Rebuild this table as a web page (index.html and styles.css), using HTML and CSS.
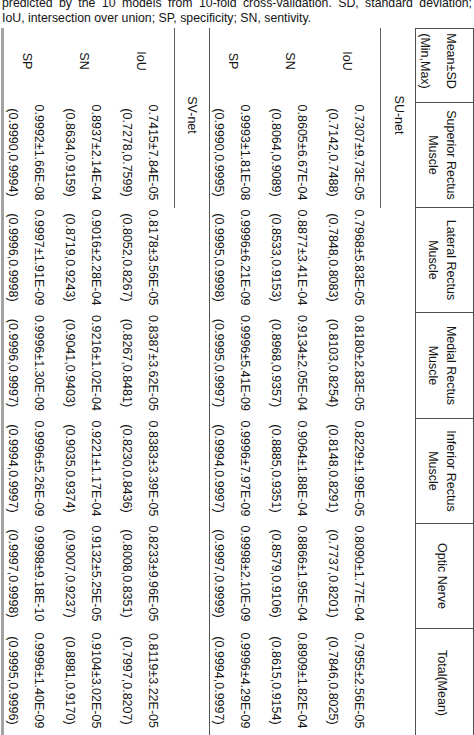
FILE: index.html
```html
<!DOCTYPE html>
<html lang="en">
<head>
<meta charset="utf-8">
<title>Table</title>
<link rel="stylesheet" href="styles.css">
</head>
<body>
<p class="caption"><span class="just">predicted by the 10 models from 10-fold cross-validation. SD, standard deviation;</span><span class="line">IoU, intersection over union; SP, specificity; SN, sentivity.</span></p>
<div class="table-wrap">
  <div class="table">
    <div class="row head">
      <div class="h first"><div>Mean±SD</div><div class="h2">(Min,Max)</div></div>
      <div class="h"><div>Superior Rectus</div><div>Muscle</div></div>
      <div class="h"><div>Lateral Rectus</div><div>Muscle</div></div>
      <div class="h"><div>Medial Rectus</div><div>Muscle</div></div>
      <div class="h"><div>Inferior Rectus</div><div>Muscle</div></div>
      <div class="h"><div>Optic Nerve</div></div>
      <div class="h"><div>Total(Mean)</div></div>
    </div>

    <div class="row group"><div class="gname">SU-net</div></div>
    <div class="row data">
      <div class="label">IoU</div>
      <div class="val"><div>0.7307±9.73E-05</div><div>(0.7142,0.7488)</div></div>
      <div class="val"><div>0.7968±5.83E-05</div><div>(0.7848,0.8083)</div></div>
      <div class="val"><div>0.8180±2.83E-05</div><div>(0.8103,0.8254)</div></div>
      <div class="val"><div>0.8229±1.99E-05</div><div>(0.8148,0.8291)</div></div>
      <div class="val"><div>0.8090±1.77E-04</div><div>(0.7737,0.8201)</div></div>
      <div class="val"><div>0.7955±2.56E-05</div><div>(0.7846,0.8025)</div></div>
    </div>
    <div class="row data">
      <div class="label">SN</div>
      <div class="val"><div>0.8605±6.67E-04</div><div>(0.8064,0.9089)</div></div>
      <div class="val"><div>0.8877±3.41E-04</div><div>(0.8533,0.9153)</div></div>
      <div class="val"><div>0.9134±2.05E-04</div><div>(0.8968,0.9357)</div></div>
      <div class="val"><div>0.9064±1.88E-04</div><div>(0.8885,0.9351)</div></div>
      <div class="val"><div>0.8866±1.95E-04</div><div>(0.8579,0.9106)</div></div>
      <div class="val"><div>0.8909±1.82E-04</div><div>(0.8615,0.9154)</div></div>
    </div>
    <div class="row data sep">
      <div class="label">SP</div>
      <div class="val"><div>0.9993±1.81E-08</div><div>(0.9990,0.9995)</div></div>
      <div class="val"><div>0.9996±6.21E-09</div><div>(0.9995,0.9998)</div></div>
      <div class="val"><div>0.9996±5.41E-09</div><div>(0.9995,0.9997)</div></div>
      <div class="val"><div>0.9996±7.97E-09</div><div>(0.9994,0.9997)</div></div>
      <div class="val"><div>0.9998±2.10E-09</div><div>(0.9997,0.9999)</div></div>
      <div class="val"><div>0.9996±4.29E-09</div><div>(0.9994,0.9997)</div></div>
    </div>

    <div class="row group group-b"><div class="gname">SV-net</div></div>
    <div class="row data">
      <div class="label">IoU</div>
      <div class="val"><div>0.7415±7.84E-05</div><div>(0.7278,0.7599)</div></div>
      <div class="val"><div>0.8178±3.56E-05</div><div>(0.8052,0.8267)</div></div>
      <div class="val"><div>0.8387±3.62E-05</div><div>(0.8267,0.8481)</div></div>
      <div class="val"><div>0.8383±3.39E-05</div><div>(0.8230,0.8436)</div></div>
      <div class="val"><div>0.8233±9.96E-05</div><div>(0.8008,0.8351)</div></div>
      <div class="val"><div>0.8119±3.22E-05</div><div>(0.7997,0.8207)</div></div>
    </div>
    <div class="row data">
      <div class="label">SN</div>
      <div class="val"><div>0.8937±2.14E-04</div><div>(0.8634,0.9159)</div></div>
      <div class="val"><div>0.9016±2.28E-04</div><div>(0.8719,0.9243)</div></div>
      <div class="val"><div>0.9216±1.02E-04</div><div>(0.9041,0.9403)</div></div>
      <div class="val"><div>0.9221±1.17E-04</div><div>(0.9035,0.9374)</div></div>
      <div class="val"><div>0.9132±5.25E-05</div><div>(0.9007,0.9237)</div></div>
      <div class="val"><div>0.9104±3.02E-05</div><div>(0.8981,0.9170)</div></div>
    </div>
    <div class="row data end">
      <div class="label">SP</div>
      <div class="val"><div>0.9992±1.66E-08</div><div>(0.9990,0.9994)</div></div>
      <div class="val"><div>0.9997±1.91E-09</div><div>(0.9996,0.9998)</div></div>
      <div class="val"><div>0.9996±1.30E-09</div><div>(0.9996,0.9997)</div></div>
      <div class="val"><div>0.9996±5.26E-09</div><div>(0.9994,0.9997)</div></div>
      <div class="val"><div>0.9998±9.18E-10</div><div>(0.9997,0.9998)</div></div>
      <div class="val"><div>0.9996±1.40E-09</div><div>(0.9995,0.9996)</div></div>
    </div>
  </div>
</div>
</body>
</html>
```
FILE: styles.css
```css
* { box-sizing: border-box; }

html, body {
  margin: 0;
  background: #ffffff;
}

body {
  color: #141414;
  font-family: "Liberation Sans", Arial, sans-serif;
  overflow: hidden;
}

.caption {
  margin: -4px 2px 0 2px;
  font-size: 12.3px;
  line-height: 15px;
}

.caption .just {
  display: block;
  text-align: justify;
  text-align-last: justify;
}

.caption .line {
  display: block;
}

.table-wrap {
  margin-top: 2px;
  width: 474px;
  height: 707px;
  overflow: hidden;
}

.table {
  width: 710px;
  font-size: 12.5px;
  transform-origin: 0 0;
  transform: translateX(474px) rotate(90deg);
}

.row {
  display: grid;
  grid-template-columns: 75px 105px 105px 106px 105px 105px 109px;
}

.head {
  height: 58px;
}

.h {
  display: flex;
  flex-direction: column;
  justify-content: center;
  align-items: center;
  padding-top: 4px;
  line-height: 18px;
  text-align: center;
  white-space: nowrap;
  border-top: 1px solid #505050;
  border-bottom: 1px solid #505050;
  border-right: 1px solid #505050;
}

.h.first {
  justify-content: flex-start;
  border-left: 1px solid #505050;
  padding-top: 12.5px;
  padding-right: 9px;
}

.h2 {
  margin-top: 8.5px;
}

.group {
  height: 36px;
}

.group-b {
  height: 35px;
}

.gname {
  grid-column: 1 / 3;
  text-align: center;
  line-height: 35px;
  padding-right: 6px;
  border-bottom: 1px solid #606060;
}

.group-b .gname {
  line-height: 34px;
}

.data {
  height: 57px;
}

.label {
  padding: 20px 9px 0 0;
  line-height: 26px;
  text-align: center;
}

.val {
  padding: 8px 6px 0 0;
  line-height: 26px;
  text-align: center;
  white-space: nowrap;
}

.sep {
  border-bottom: 1px solid #555555;
}

.end {
  height: 59px;
  border-bottom: 3px solid #a3a3a3;
}
```
